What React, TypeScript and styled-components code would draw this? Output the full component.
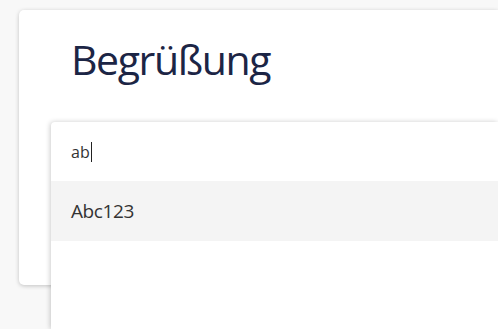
import React from "react";
import styled, { createGlobalStyle } from "styled-components";

const Global = createGlobalStyle`
  html, body { margin: 0; padding: 0; background: #f8f8f8; overflow: hidden; }
  body { font-family: "Open Sans", "Noto Sans", sans-serif; width: 498px; height: 329px; }
`;

const Page = styled.div`
  padding: 10px 0 0 19px;
  width: 498px;
  height: 329px;
  box-sizing: border-box;
`;

const Card = styled.div`
  position: relative;
  background: #fff;
  border-radius: 5px 0 0 5px;
  box-shadow: 0 1px 4px rgba(0, 0, 0, 0.22);
  height: 275px;
  padding: 0 0 0 52px;
  box-sizing: border-box;
`;

const Title = styled.h1`
  margin: 0;
  padding-top: 20px;
  font-size: 41px;
  font-weight: 400;
  line-height: 58px;
  color: #1c2545;
  letter-spacing: -1.4px;
`;

const Dropdown = styled.div`
  position: absolute;
  left: 32px;
  right: 0;
  top: 112px;
  height: 207px;
  background: #fff;
  border-radius: 4px 0 0 0;
  box-shadow: -1px 0 5px rgba(0, 0, 0, 0.2);
  display: flex;
  flex-direction: column;
`;

const InputRow = styled.div`
  height: 59px;
  display: flex;
  align-items: center;
  padding-left: 20px;
  font-size: 16px;
  color: #333;
`;

const Caret = styled.span`
  display: inline-block;
  width: 1px;
  height: 20px;
  background: #222;
  margin-left: 1px;
`;

const Option = styled.div<{ $active?: boolean }>`
  height: 60px;
  display: flex;
  align-items: center;
  padding-left: 20px;
  font-size: 19px;
  letter-spacing: -0.4px;
  color: #333;
  background: ${(p) => (p.$active ? "#f4f4f4" : "transparent")};
`;

export default function App() {
  return (
    <>
      <Global />
      <Page>
        <Card>
          <Title>Begrüßung</Title>
          <Dropdown>
            <InputRow>
              ab<Caret />
            </InputRow>
            <Option $active>Abc123</Option>
          </Dropdown>
        </Card>
      </Page>
    </>
  );
}
